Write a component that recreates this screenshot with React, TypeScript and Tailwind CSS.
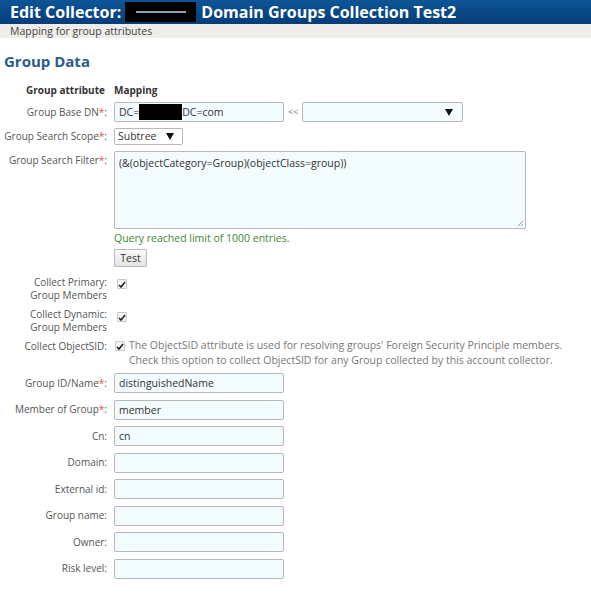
import React from 'react';

const inputCls =
    'h-[20px] w-[170px] rounded-[2px] border border-[#b5b9bc] bg-[#f2fbfe] px-[4px] text-[10.5px] leading-[18px] text-[#333]';

function Req() {
    return <span className="text-[#e2574c]">*</span>;
}

function Label({ children, className = '' }: { children: React.ReactNode; className?: string }) {
    return (
        <div
            className={`w-[107px] shrink-0 whitespace-nowrap text-right text-[10px] leading-[12.5px] text-[#555] ${className}`}
        >
            {children}
        </div>
    );
}

function Caret() {
    return (
        <svg width="8" height="7" viewBox="0 0 8 7">
            <path d="M0 0 H8 L4 7 Z" fill="#111" />
        </svg>
    );
}

function Check() {
    return (
        <span className="flex h-[10px] w-[10px] items-center justify-center rounded-[1px] border border-[#c9c9c9] bg-[#f3f3f3]">
            <svg width="8" height="7" viewBox="0 0 8 7">
                <path d="M1 4 L3 6 L7 1" stroke="#222" strokeWidth="1.6" fill="none" />
            </svg>
        </span>
    );
}

const plainRows = [
    { label: 'Group ID/Name', req: true, value: 'distinguishedName' },
    { label: 'Member of Group', req: true, value: 'member' },
    { label: 'Cn', req: false, value: 'cn' },
    { label: 'Domain', req: false, value: '' },
    { label: 'External id', req: false, value: '' },
    { label: 'Group name', req: false, value: '' },
    { label: 'Owner', req: false, value: '' },
    { label: 'Risk level', req: false, value: '' },
];

export default function App() {
    return (
        <div className="h-[600px] w-[591px] overflow-hidden bg-white" style={{ fontFamily: '"Open Sans", sans-serif' }}>
            {/* Title bar */}
            <div className="flex h-[24px] items-center bg-gradient-to-b from-[#0d5596] to-[#063d78] pl-[10px] text-[16px] font-bold leading-[24px] text-white">
                <span>Edit Collector:</span>
                <span className="ml-[4px] flex h-[20px] w-[71px] items-center justify-center bg-black">
                    <span className="h-[2px] w-[50px] bg-[#8aa0bf]" />
                </span>
                <span className="ml-[5px]">Domain Groups Collection Test2</span>
            </div>
            <div className="h-[14px] bg-[#eeedea] pl-[10px] text-[10.5px] leading-[14px] text-[#444]">
                Mapping for group attributes
            </div>

            <h2 className="mt-[13px] pl-[4px] text-[15px] font-bold leading-[20px] text-[#2a5b8c]">Group Data</h2>

            <div className="mt-[13px] flex flex-col">
                {/* Column headers */}
                <div className="flex items-center gap-[7px]">
                    <div className="w-[107px] shrink-0 whitespace-nowrap pl-[26px] text-[10px] font-bold leading-[13px] text-[#333]">
                        Group attribute
                    </div>
                    <div className="text-[10px] font-bold leading-[13px] text-[#333]">Mapping</div>
                </div>

                {/* Group Base DN */}
                <div className="mt-[5px] flex items-center gap-[7px]">
                    <Label>
                        Group Base DN<Req />:
                    </Label>
                    <div className="flex items-center">
                        <div className={`${inputCls} flex items-center`}>
                            <span>DC=</span>
                            <span className="h-[16px] w-[43px] bg-black" />
                            <span>DC=com</span>
                        </div>
                        <span className="ml-[4px] text-[9px] text-[#777]">&lt;&lt;</span>
                        <div className="ml-[4px] flex h-[20px] w-[161px] items-center justify-end rounded-[2px] border border-[#b5b9bc] bg-[#f2fbfe] pr-[9px]">
                            <Caret />
                        </div>
                    </div>
                </div>

                {/* Scope */}
                <div className="mt-[6px] flex items-center gap-[7px]">
                    <Label>
                        Group Search Scope<Req />:
                    </Label>
                    <div className="flex h-[17px] w-[69px] items-center justify-between rounded-[2px] border border-[#b5b9bc] bg-white pl-[3px] pr-[8px] text-[10.5px] text-[#333]">
                        <span>Subtree</span>
                        <Caret />
                    </div>
                </div>

                {/* Filter */}
                <div className="mt-[6px] flex items-start gap-[7px]">
                    <Label className="pt-[3px]">
                        Group Search Filter<Req />:
                    </Label>
                    <div className="flex flex-col">
                        <div className="relative h-[78px] w-[412px] rounded-[2px] border border-[#b5b9bc] bg-[#f2fbfe] px-[4px] pt-[2px] text-[10.5px] leading-[18px] text-[#333]">
                            (&amp;(objectCategory=Group)(objectClass=group))
                            <svg className="absolute bottom-[1px] right-[1px]" width="7" height="7" viewBox="0 0 7 7">
                                <path d="M6 1 L1 6 M6 4 L4 6" stroke="#999" strokeWidth="1" />
                            </svg>
                        </div>
                        <div className="mt-[2px] text-[10.5px] leading-[14px] text-[#3b8a2e]">
                            Query reached limit of 1000 entries.
                        </div>
                        <button className="mt-[4px] h-[18px] w-[33px] rounded-[1px] border border-[#b9b9b9] bg-gradient-to-b from-[#fafafa] to-[#e3e3e3] text-[10.5px] leading-[16px] text-[#333]">
                            Test
                        </button>
                    </div>
                </div>

                {/* Collect Primary */}
                <div className="mt-[9px] flex items-start gap-[7px]">
                    <Label>
                        Collect Primary:
                        <br />
                        Group Members
                    </Label>
                    <div className="pl-[3px] pt-[3px]">
                        <Check />
                    </div>
                </div>

                <div className="mt-[7px] flex items-start gap-[7px]">
                    <Label>
                        Collect Dynamic:
                        <br />
                        Group Members
                    </Label>
                    <div className="pl-[3px] pt-[4px]">
                        <Check />
                    </div>
                </div>

                <div className="mt-[5px] flex items-start gap-[7px]">
                    <Label className="pt-[2px]">Collect ObjectSID:</Label>
                    <div className="flex items-start gap-[4px]">
                        <div className="pl-[1px] pt-[3px]">
                            <Check />
                        </div>
                        <div className="whitespace-nowrap text-[10.5px] leading-[15px] text-[#777]">
                            The ObjectSID attribute is used for resolving groups' Foreign Security Principle members.
                            <br />
                            Check this option to collect ObjectSID for any Group collected by this account collector.
                        </div>
                    </div>
                </div>

                <div className="mt-[5px] flex flex-col gap-[6.5px]">
                    {plainRows.map((row) => (
                        <div key={row.label} className="flex items-center gap-[7px]">
                            <Label>
                                {row.label}
                                {row.req && <Req />}:
                            </Label>
                            <div className={inputCls}>{row.value}</div>
                        </div>
                    ))}
                </div>
            </div>
        </div>
    );
}
